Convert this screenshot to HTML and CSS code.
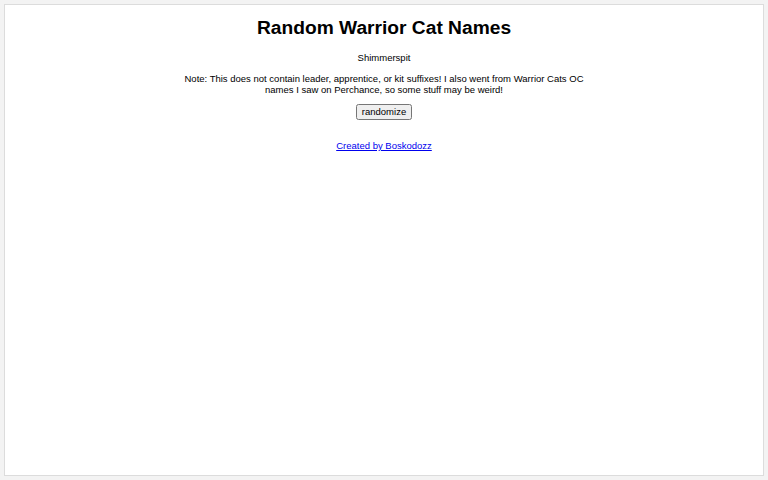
FILE: index.html
```html
<!DOCTYPE html>
<html>
<head>
  <title>Random Warrior Cat Names</title>
  <link rel="stylesheet" href="styles.css">
</head>
<body>
  <div class="frame">
    <h1 class="title">Random Warrior Cat Names</h1>
    <p id="output" class="name">Shimmerspit</p>
    <p class="note">Note: This does not contain leader, apprentice, or kit suffixes! I also went from Warrior Cats OC names I saw on Perchance, so some stuff may be weird!</p>
    <button id="randomize" class="btn">randomize</button>
    <p class="credit"><a href="#">Created by Boskodozz</a></p>
  </div>

  <script>
    var prefixes = ["Shimmer", "Frost", "Ember", "Moss", "Thistle", "Raven", "Dapple", "Storm"];
    var suffixes = ["spit", "pelt", "claw", "whisker", "fall", "heart", "stripe", "tail"];

    function pick(list) {
      return list[Math.floor(Math.random() * list.length)];
    }

    document.getElementById("randomize").addEventListener("click", function() {
      document.getElementById("output").innerHTML = pick(prefixes) + pick(suffixes);
    });
  </script>
</body>
</html>
```

FILE: styles.css
```css
html, body {
  height: 100%;
}

body {
  margin: 0;
  padding: 4px;
  box-sizing: border-box;
  background-color: #f3f3f3;
  font-family: "Liberation Sans", Arial, sans-serif;
}

.frame {
  height: 100%;
  box-sizing: border-box;
  background-color: white;
  border: 1px solid #dcdcdc;
  text-align: center;
  padding-top: 12px;
}

.title {
  font-size: 19.2px;
  line-height: 22px;
  margin: 0 0 13px 0;
}

.name {
  font-size: 9.5px;
  line-height: 11px;
  margin: 0 0 10px 0;
}

.note {
  font-size: 9.5px;
  line-height: 11px;
  width: 402px;
  margin: 0 auto 6px auto;
}

.btn {
  font-family: "Liberation Sans", Arial, sans-serif;
  font-size: 9.5px;
  line-height: 10px;
  padding: 1px 4px;
}

.credit {
  font-size: 9.5px;
  line-height: 11px;
  margin-top: 20px;
}

.credit a {
  color: #0000ee;
}
```
